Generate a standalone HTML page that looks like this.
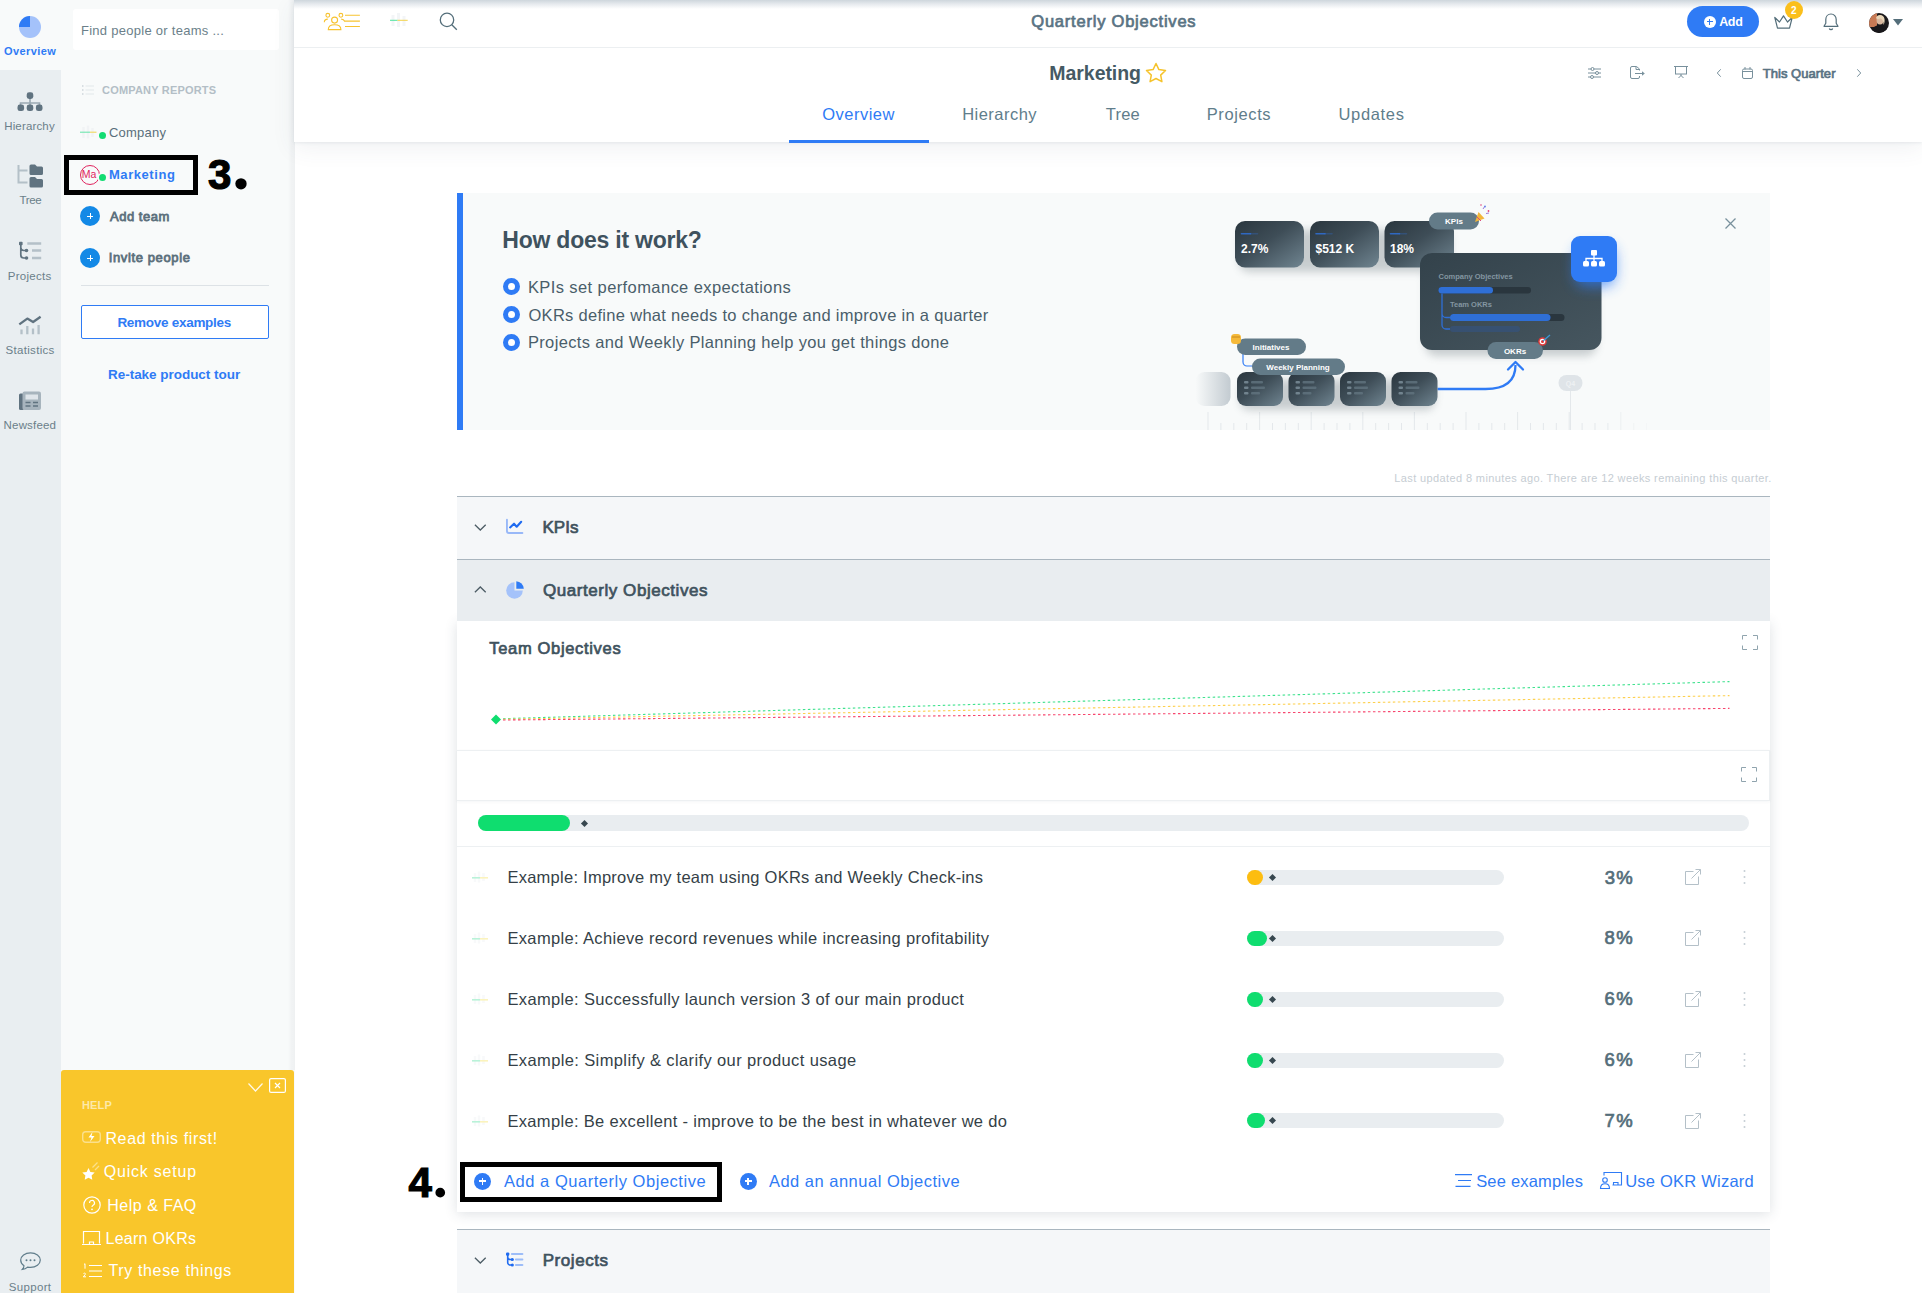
<!DOCTYPE html>
<html lang="en">
<head>
<meta charset="utf-8">
<title>Quarterly Objectives</title>
<style>
*{box-sizing:border-box;margin:0;padding:0}
html,body{width:1922px;height:1293px;overflow:hidden;background:#fff}
body{position:relative;font-family:"Liberation Sans",sans-serif;color:#475b67}
.a{position:absolute}
.t{position:absolute;white-space:nowrap;line-height:1}
svg{position:absolute;overflow:visible}
b,.b{font-weight:bold}
/* left rail */
#rail{left:0;top:0;width:61px;height:1293px;background:#e9eef1}
#rail .sel{left:0;top:0;width:61px;height:70px;background:#f8fafa}
.rl{font-size:12px;color:#6b7f8a;width:61px;text-align:center;left:0}
/* sidebar */
#side{left:61px;top:0;width:234px;height:1293px;background:#f8fafa}
#search{left:12px;top:8.500px;width:206px;height:41.500px;background:#fff;border-radius:3px}
.sl{font-size:13.5px;color:#5f737e;left:48px}
.plus{width:20px;height:20px;border-radius:10px;background:#1389e6;left:19px}
.plus:before{content:"";position:absolute;left:7px;top:9.500px;width:6px;height:1px;background:#fff}
.plus:after{content:"";position:absolute;left:9.500px;top:7px;width:1px;height:6px;background:#fff}
.gdot{width:7px;height:7px;border-radius:4px;background:#13dc72;box-shadow:0 0 0 1.500px #f9fafb}
#help{left:0;top:1070px;width:233px;height:223px;background:#f9c62b;border-radius:3px 3px 0 0}
.hl{font-size:16.5px;color:#fff}
/* main */
#main{left:294px;top:0;width:1628px;height:1293px;background:linear-gradient(90deg,transparent 1px,#fff 1px)}
#hdr{left:0;top:0;width:1628px;height:142px;background:#fff;box-shadow:0 1px 3px rgba(60,80,100,.09),0 6px 22px rgba(60,80,100,.08)}
#topline{left:0;top:47px;width:1628px;height:1px;background:#eceff1}
#topshade{left:0;top:0;width:1628px;height:9px;background:linear-gradient(#ced6dc,#e6eaee 45%,#fff)}
.tab{font-size:17px;color:#6b7f8a}
.sec{left:163px;width:1313px;border-top:1px solid #aab6bf;background:#f5f7f9}
.sect{font-size:17px;font-weight:bold;color:#475b67;left:249px}
.row{font-size:17px;color:#37474f;left:214px}
.pct{font-size:17px;color:#546e7a;font-weight:bold;width:40px;text-align:right;left:1298px}
.trk{left:953px;width:257px;height:15px;border-radius:8px;background:#e9edf0}
.fill{left:953px;height:15px;border-radius:8px;background:#0fdd6f}
.dm{width:5px;height:5px;background:#37474f;transform:rotate(45deg)}
.lnk{font-size:17px;color:#2f7bf5}
</style>
</head>
<body>
<!-- LEFT RAIL -->
<div id="rail" class="a">
  <div class="a sel"></div>
  <svg style="left:18px;top:14.800px" width="24" height="24" viewBox="0 0 24 24"><circle cx="12" cy="12" r="11" fill="#a4c2fa"/><path d="M12 12V1A11 11 0 0 0 1 12Z" fill="#2f7bf5"/></svg>
  <svg style="left:17px;top:92px" width="26" height="20" viewBox="0 0 26 20"><path d="M13 6v5M3.5 14v-3h19v3M13 11v3" stroke="#9aa9b3" stroke-width="1.6" fill="none"/><rect x="9.700" y="0.300" width="6.600" height="6.600" rx="2.400" fill="#607380"/><rect x="0.5" y="12.5" width="6.6" height="6.6" rx="2.4" fill="#607380"/><rect x="9.7" y="12.5" width="6.6" height="6.6" rx="2.4" fill="#607380"/><rect x="18.9" y="12.5" width="6.6" height="6.6" rx="2.4" fill="#607380"/></svg>
  <svg style="left:17px;top:164px" width="26" height="24" viewBox="0 0 26 24"><path d="M1.5 1v17.5h9M1.5 6.5h9" stroke="#b4c0c8" stroke-width="2" fill="none"/><path d="M12.5 2a1.5 1.5 0 0 1 1.500-1.500h4l2 2h4.500a1.500 1.500 0 0 1 1.500 1.500v5.500a1.500 1.500 0 0 1-1.500 1.500h-10.500a1.500 1.500 0 0 1-1.500-1.500z" fill="#607380"/><path d="M12.500 14.500a1.500 1.500 0 0 1 1.500-1.500h4l2 2h4.500a1.500 1.500 0 0 1 1.500 1.500v5.500a1.500 1.500 0 0 1-1.500 1.500h-10.500a1.500 1.500 0 0 1-1.500-1.500z" fill="#607380"/></svg>
  <svg style="left:19px;top:241px" width="22" height="20" viewBox="0 0 22 20"><path d="M8.300 2.500H22.200M13 9.500H22.200M13 17H22.200" stroke="#b4c0c8" stroke-width="2.500" fill="none"/><rect x="0" y="0.700" width="3.600" height="3.600" rx=".8" fill="#607380"/><path d="M1.800 3v11a3 3 0 0 0 3 3h2.700M1.800 6.500a3 3 0 0 0 3 3h2.700" stroke="#607380" stroke-width="1.700" fill="none"/><circle cx="7.500" cy="9.500" r="1.800" fill="#607380"/><circle cx="7.500" cy="17" r="1.800" fill="#607380"/></svg>
  <svg style="left:19px;top:315px" width="22" height="20" viewBox="0 0 22 20"><path d="M2.500 14.600V19.200M8.300 11V19.200M14 13.400V19.200M19.600 10V19.200" stroke="#b4c0c8" stroke-width="2.300" fill="none"/><path d="M0.300 9.400L8.300 3.600L14.100 7L21.600 1.800" stroke="#607380" stroke-width="2.300" fill="none" stroke-linejoin="round"/></svg>
  <svg style="left:19px;top:391px" width="22" height="20" viewBox="0 0 22 20"><rect x="0" y="2.500" width="5" height="16.500" rx="1.500" fill="#607380"/><rect x="3.500" y="0.500" width="18.500" height="18.500" rx="2" fill="#a7b4bd"/><rect x="6.500" y="3.500" width="12.500" height="5" fill="#dfe5ea"/><path d="M6.500 11.500h5M14 11.500h5M6.500 15h5M14 15h5" stroke="#607380" stroke-width="1.600"/></svg>
  <svg style="left:19px;top:1252px" width="22" height="20" viewBox="0 0 22 20"><path d="M11.500 0.800c5.500 0 9.800 3.200 9.800 7.300s-4.300 7.300-9.800 7.300c-1 0-2-.1-2.900-.3-1.500 1.500-3.400 2.300-5.300 2.400 1-1 1.600-2.300 1.700-3.700C2.900 12.500 1.700 10.400 1.700 8.100c0-4.100 4.300-7.300 9.800-7.300z" stroke="#607d8b" stroke-width="1.200" fill="none"/><circle cx="7.500" cy="8.200" r="1" fill="#607d8b"/><circle cx="11.500" cy="8.200" r="1" fill="#607d8b"/><circle cx="15.500" cy="8.200" r="1" fill="#607d8b"/></svg>
</div>
<!-- SIDEBAR -->
<div id="side" class="a">
  <div class="a" style="left:227px;top:0;width:7px;height:1070px;background:linear-gradient(90deg,#f8fafa,#f1f3f4 50%,#eff1f2)"></div>
  <div id="search" class="a"></div>
  <svg style="left:21px;top:85px" width="12" height="10" viewBox="0 0 12 10"><path d="M0 1h1.500M0 5h1.500M0 9h1.500" stroke="#cdd5da" stroke-width="1.300"/><path d="M3.500 1h8.500M3.500 5h8.500M3.500 9h8.500" stroke="#e2e7ea" stroke-width="1.200"/></svg>
  <svg style="left:19px;top:123px" width="18" height="18" viewBox="0 0 18 18"><path d="M3.500 4v11M8 2.500v13M12.500 5v9" stroke="#f1f3f5" stroke-width="2.500"/><path d="M0 9.200h10" stroke="#6fe6ae" stroke-width="1.100"/><path d="M10 9.200h6.500" stroke="#f1d75c" stroke-width="1.100"/></svg>
  <div class="a gdot" style="left:38px;top:132px"></div>
  <div class="a" style="left:3px;top:155px;width:134px;height:40px;border:5px solid #000"></div>
  <div class="a" style="left:19px;top:165px;width:20px;height:20px;border-radius:10px;border:1px solid #e0245e"></div>
  <div class="a gdot" style="left:38px;top:174px"></div>
  <div class="a plus" style="top:206px"></div>
  <div class="a plus" style="top:248px"></div>
  <div class="a" style="left:20px;top:285px;width:188px;height:1px;background:#dde2e6"></div>
  <div class="a" style="left:20px;top:305px;width:188px;height:34px;border:1.500px solid #2f7bf5;background:#fff;border-radius:2px"></div>
  <div id="help" class="a">
    <svg style="left:187px;top:13px" width="15" height="9" viewBox="0 0 15 9"><path d="M0.500 0.500l7 7.500 7-7.500" stroke="#fff" stroke-width="1.200" fill="none" opacity=".9"/></svg>
    <svg style="left:208px;top:8px" width="17" height="15" viewBox="0 0 17 15"><rect x="0.600" y="0.600" width="15.800" height="13.800" rx="1.500" stroke="#fff" stroke-width="1.200" fill="none"/><path d="M6 5l5 5M11 5l-5 5" stroke="#fff" stroke-width="1.200"/></svg>
    <svg style="left:21px;top:60px" width="19" height="14" viewBox="0 0 19 14"><rect x="0.700" y="1.700" width="17.600" height="10.600" rx="3" stroke="#fbe08c" stroke-width="1.400" fill="none"/><path d="M10.500 2l-4 5.500h3l-1.500 4.500 4.500-6h-3z" fill="#fff"/></svg>
    <svg style="left:21px;top:92px" width="18" height="18" viewBox="0 0 18 18"><path d="M6.500 6l1.900 3.900 4.300.6-3.100 3 .7 4.300-3.800-2-3.800 2 .7-4.300-3.100-3 4.300-.6z" fill="#fff"/><path d="M10.500 5.500l5-5M13 8l4-4" stroke="#fbe08c" stroke-width="1.300"/></svg>
    <svg style="left:22px;top:126px" width="18" height="18" viewBox="0 0 18 18"><circle cx="9" cy="9" r="8.200" stroke="#fff" stroke-width="1.200" fill="none"/><path d="M6.500 7a2.500 2.500 0 1 1 3.600 2.200c-.7.400-1.100.9-1.100 1.800" stroke="#fff" stroke-width="1.200" fill="none"/><circle cx="9" cy="13.300" r=".9" fill="#fff"/></svg>
    <svg style="left:21px;top:160px" width="19" height="16" viewBox="0 0 19 16"><path d="M1.500 13.500v-12h16v12M0 14.500h19" stroke="#fff" stroke-width="1.200" fill="none"/><path d="M7.500 14.500v-2.500h4v2.500" stroke="#fff" stroke-width="1.200" fill="none"/></svg>
    <svg style="left:22px;top:193px" width="19" height="16" viewBox="0 0 19 16"><path d="M6 2.500h13M6 8h13M6 13.500h13" stroke="#fff" stroke-width="1.200"/><path d="M1 1.500l1-.8v5M.5 10.500c1.500-1 2.500.2 1.500 1.300l-1.700 2h2.700" stroke="#fff" stroke-width="1" fill="none"/></svg>
  </div>
</div>

<!-- MAIN -->
<div id="main" class="a">
  <div id="hdr" class="a">
    <div id="topshade" class="a"></div>
    <div id="topline" class="a"></div>
    <!-- top-left icons (coords relative to main: x-294) -->
    <!-- Add button -->
    <div class="a" style="left:1393px;top:6px;width:72px;height:31px;border-radius:16px;background:#2f7bf5"></div>
    <div class="a" style="left:1409.500px;top:15.500px;width:12px;height:12px;border-radius:6px;background:#fff"></div>
    <div class="a" style="left:1412.500px;top:20.750px;width:6px;height:1.500px;background:#2f7bf5"></div>
    <div class="a" style="left:1414.750px;top:18.500px;width:1.500px;height:6px;background:#2f7bf5"></div>
    <svg style="left:1480px;top:15px" width="19" height="14" viewBox="0 0 19 14"><path d="M0.800 2.500l2.700 10.700h12l2.700-10.700-4.700 4.500-4-6.200-4 6.200z" stroke="#546e7a" stroke-width="1.200" fill="none" stroke-linejoin="round"/></svg>
    <div class="a" style="left:1491px;top:1px;width:18px;height:18px;border-radius:9px;background:#fbbf1c"></div>
    <svg style="left:1529px;top:13px" width="16" height="18" viewBox="0 0 16 18"><path d="M8 1c-3 0-5.200 2.300-5.200 5.500v3.800l-1.800 3h14l-1.800-3v-3.800c0-3.200-2.200-5.500-5.200-5.500z" stroke="#546e7a" stroke-width="1.200" fill="none" stroke-linejoin="round"/><path d="M6.300 15.500a1.800 1.800 0 0 0 3.400 0" stroke="#546e7a" stroke-width="1.200" fill="none"/></svg>
    <svg style="left:1575px;top:13px" width="20" height="20" viewBox="0 0 20 20"><defs><clipPath id="av"><circle cx="10" cy="10" r="10"/></clipPath></defs><g clip-path="url(#av)"><rect width="20" height="20" fill="#1c1a1c"/><rect x="0" y="0" width="8" height="14" fill="#c87a55"/><ellipse cx="11" cy="7" rx="3.500" ry="4.500" fill="#d9b9a0"/><path d="M7 5c1-4 8-4 8.500 1 .5 3-.5 5-1 6 0-4-1-6-3-6.500-2 .5-3.500 1-4.500-.5z" fill="#e8d6b8"/><path d="M2 20c1-6 5-8 9-8s7 2 8 8z" fill="#18171a"/></g></svg>
    <svg style="left:1599px;top:19px" width="10" height="7" viewBox="0 0 10 7"><path d="M0 0h10l-5 6.500z" fill="#546e7a"/></svg>
    <!-- second row -->
    <svg style="left:851px;top:62px" width="22" height="21" viewBox="0 0 22 21"><path d="M11 1.500l2.900 6.100 6.600.9-4.800 4.600 1.200 6.600-5.900-3.200-5.900 3.200 1.200-6.600-4.800-4.600 6.600-.9z" stroke="#f5c32c" stroke-width="1.500" fill="none" stroke-linejoin="round"/></svg>
    <svg style="left:1294px;top:67px" width="13" height="12" viewBox="0 0 13 12"><g stroke="#78909c" stroke-width="1" fill="#fff"><path d="M0 2h13M0 6h13M0 10h13"/><circle cx="4.500" cy="2" r="1.500"/><circle cx="9" cy="6" r="1.500"/><circle cx="4" cy="10" r="1.500"/></g></svg>
    <svg style="left:1336px;top:66px" width="15" height="13" viewBox="0 0 15 13"><g stroke="#78909c" stroke-width="1" fill="none"><path d="M9.500 4.500v-1.500l-3-2.500h-4.500a1.500 1.500 0 0 0-1.500 1.500v9a1.500 1.500 0 0 0 1.500 1.500h6a1.500 1.500 0 0 0 1.500-1.500v-1"/><path d="M6 0.500v3h3.500"/><path d="M5 7.500h8.500"/></g><path d="M12 5.200l2.800 2.300-2.800 2.300z" fill="#78909c"/></svg>
    <svg style="left:1380px;top:66px" width="14" height="12" viewBox="0 0 14 12"><g stroke="#78909c" stroke-width="1" fill="none"><path d="M0 0.500h14"/><rect x="1.500" y="0.500" width="11" height="7.500"/><path d="M7 8v2M7 9.500l-2.500 2.500M7 9.500l2.500 2.500"/></g></svg>
    <svg style="left:1422.500px;top:69.300px" width="4" height="8" viewBox="0 0 4 8"><path d="M3.700 0.300l-3.400 3.700 3.400 3.700" stroke="#78909c" stroke-width="1" fill="none"/></svg>
    <svg style="left:1448px;top:66.500px" width="11" height="12" viewBox="0 0 11 12"><g stroke="#78909c" stroke-width="1" fill="none"><rect x="0.500" y="2" width="10" height="9.500" rx="1.500"/><path d="M0.500 4.500h10M3 0v2.500M8 0v2.500"/></g></svg>
    <svg style="left:1563px;top:69.300px" width="4" height="8" viewBox="0 0 4 8"><path d="M0.300 0.300l3.400 3.700-3.400 3.700" stroke="#78909c" stroke-width="1" fill="none"/></svg>
    <!-- tabs -->
    <div class="a" style="left:495px;top:139.500px;width:140px;height:3px;background:#2f7bf5"></div>
  </div>

  <!-- BANNER (x relative to main: abs-294) -->
  <div class="a" style="left:163px;top:193px;width:1313px;height:237px;background:#f8fafa;border-left:6px solid #2f7bf5"></div>
  <div class="a" style="left:209px;top:278px;width:17px;height:17px;border-radius:9px;border:5px solid #2f7bf5;background:#fff"></div>
  <div class="a" style="left:209px;top:306px;width:17px;height:17px;border-radius:9px;border:5px solid #2f7bf5;background:#fff"></div>
  <div class="a" style="left:209px;top:333.500px;width:17px;height:17px;border-radius:9px;border:5px solid #2f7bf5;background:#fff"></div>
  <svg style="left:1431px;top:218px" width="11" height="11" viewBox="0 0 11 11"><path d="M0.500 0.500l10 10M10.500 0.500l-10 10" stroke="#78909c" stroke-width="1.300"/></svg>


  <svg style="left:0;top:0" width="1628" height="1293" viewBox="294 0 1628 1293">
    <defs>
      <linearGradient id="gd" x1="0" y1="0" x2="1" y2="1"><stop offset="0" stop-color="#2a363e"/><stop offset=".45" stop-color="#3e4d57"/><stop offset="1" stop-color="#708591"/></linearGradient>
      <linearGradient id="gb" x1="0" y1="0" x2="1" y2="1"><stop offset="0" stop-color="#33424b"/><stop offset="1" stop-color="#46565f"/></linearGradient>
      <linearGradient id="gf" x1="0" y1="0" x2="1" y2="0"><stop offset="0" stop-color="#f8fafa"/><stop offset="1" stop-color="#c3cbd1"/></linearGradient>
      <filter id="glow" x="-60%" y="-60%" width="220%" height="220%"><feGaussianBlur stdDeviation="7"/></filter>
      <filter id="sh" x="-30%" y="-30%" width="160%" height="180%"><feGaussianBlur stdDeviation="4"/></filter>
    </defs>
    <path d="M1208.0 412V430" stroke="#e4e8eb" stroke-width="1" opacity="1.00"/><path d="M1220.9 423V430" stroke="#e4e8eb" stroke-width="1" opacity="1.00"/><path d="M1233.8 423V430" stroke="#e4e8eb" stroke-width="1" opacity="1.00"/><path d="M1246.7 423V430" stroke="#e4e8eb" stroke-width="1" opacity="1.00"/><path d="M1259.6 412V430" stroke="#e4e8eb" stroke-width="1" opacity="1.00"/><path d="M1272.5 423V430" stroke="#e4e8eb" stroke-width="1" opacity="1.00"/><path d="M1285.4 423V430" stroke="#e4e8eb" stroke-width="1" opacity="1.00"/><path d="M1298.3 423V430" stroke="#e4e8eb" stroke-width="1" opacity="1.00"/><path d="M1311.2 412V430" stroke="#e4e8eb" stroke-width="1" opacity="1.00"/><path d="M1324.1 423V430" stroke="#e4e8eb" stroke-width="1" opacity="1.00"/><path d="M1337.0 423V430" stroke="#e4e8eb" stroke-width="1" opacity="1.00"/><path d="M1349.9 423V430" stroke="#e4e8eb" stroke-width="1" opacity="1.00"/><path d="M1362.8 412V430" stroke="#e4e8eb" stroke-width="1" opacity="1.00"/><path d="M1375.7 423V430" stroke="#e4e8eb" stroke-width="1" opacity="1.00"/><path d="M1388.6 423V430" stroke="#e4e8eb" stroke-width="1" opacity="1.00"/><path d="M1401.5 423V430" stroke="#e4e8eb" stroke-width="1" opacity="1.00"/><path d="M1414.4 412V430" stroke="#e4e8eb" stroke-width="1" opacity="1.00"/><path d="M1427.3 423V430" stroke="#e4e8eb" stroke-width="1" opacity="1.00"/><path d="M1440.2 423V430" stroke="#e4e8eb" stroke-width="1" opacity="1.00"/><path d="M1453.1 423V430" stroke="#e4e8eb" stroke-width="1" opacity="1.00"/><path d="M1466.0 412V430" stroke="#e4e8eb" stroke-width="1" opacity="1.00"/><path d="M1478.9 423V430" stroke="#e4e8eb" stroke-width="1" opacity="1.00"/><path d="M1491.8 423V430" stroke="#e4e8eb" stroke-width="1" opacity="1.00"/><path d="M1504.7 423V430" stroke="#e4e8eb" stroke-width="1" opacity="1.00"/><path d="M1517.6 412V430" stroke="#e4e8eb" stroke-width="1" opacity="1.00"/><path d="M1530.5 423V430" stroke="#e4e8eb" stroke-width="1" opacity="1.00"/><path d="M1543.4 423V430" stroke="#e4e8eb" stroke-width="1" opacity="1.00"/><path d="M1556.3 423V430" stroke="#e4e8eb" stroke-width="1" opacity="1.00"/><path d="M1569.2 412V430" stroke="#e4e8eb" stroke-width="1" opacity="1.00"/><path d="M1582.1 423V430" stroke="#e4e8eb" stroke-width="1" opacity="1.00"/><path d="M1595.0 423V430" stroke="#e4e8eb" stroke-width="1" opacity="1.00"/><path d="M1607.9 423V430" stroke="#e4e8eb" stroke-width="1" opacity="0.84"/><path d="M1620.8 412V430" stroke="#e4e8eb" stroke-width="1" opacity="0.58"/><path d="M1633.7 423V430" stroke="#e4e8eb" stroke-width="1" opacity="0.33"/><path d="M1646.6 423V430" stroke="#e4e8eb" stroke-width="1" opacity="0.20"/>

    <g stroke="#f7c331" stroke-width="1.100" fill="none"><circle cx="327.800" cy="15.300" r="1.900"/><path d="M324.300 22.300c0-2 1.300-3.200 3.500-3.200"/><circle cx="334.600" cy="20.100" r="3"/><path d="M328.300 29.600c0-3.200 2.600-4.800 6.300-4.800s6.300 1.600 6.300 4.800z"/><circle cx="340.900" cy="15.300" r="1.900"/><path d="M341.200 19.100c1.800 0 3 .9 3.600 2.400"/><path d="M345 15.300H359.900M344.500 21.100H359.900M345 26.500H359.900"/></g>
    <path d="M393 15v11M398.500 13v14M404 16v10" stroke="#f3f5f7" stroke-width="3"/>
    <path d="M390 20.300H397.500" stroke="#4fe3a0" stroke-width="1"/><path d="M397.500 20.300H407.700" stroke="#f3d34a" stroke-width="1"/>
    <circle cx="447" cy="19.900" r="6.700" stroke="#546e7a" stroke-width="1.300" fill="none"/><path d="M451.800 24.700L456.800 29.800" stroke="#546e7a" stroke-width="1.300"/>
    <path d="M1570.500 391V430" stroke="#e4e8eb" stroke-width="1"/>
    <rect x="1558.500" y="375" width="24" height="16" rx="8" fill="#dfe4e8"/>
    <text x="1570.500" y="386" font-size="7" font-weight="bold" fill="#eef1f3" text-anchor="middle" font-family="Liberation Sans, sans-serif">Q4</text>
    <g opacity=".25" filter="url(#sh)"><rect x="1239" y="230" width="212" height="42" rx="10" fill="#37474f"/><rect x="1425" y="262" width="172" height="94" rx="12" fill="#37474f"/><rect x="1240" y="380" width="195" height="30" rx="9" fill="#37474f"/></g>
    <rect x="1235" y="221" width="69" height="46.500" rx="10" fill="url(#gd)"/>
    <rect x="1310" y="221" width="69" height="46.500" rx="10" fill="url(#gd)"/>
    <rect x="1384.500" y="221" width="69.500" height="46.500" rx="10" fill="url(#gd)"/>
    <path d="M1241.500 233.700h9M1316 233.700h9M1390.500 233.700h9" stroke="#2f6fd6" stroke-width="1.600" stroke-linecap="round" opacity=".85"/><path d="M1250.500 233.700h7M1325 233.700h7M1399.500 233.700h7" stroke="#2f6fd6" stroke-width="1.600" stroke-linecap="round" opacity=".3"/>
    <g font-family="Liberation Sans, sans-serif" font-weight="bold" fill="#fff" font-size="12">
      <text x="1241" y="252.500">2.7%</text><text x="1315.500" y="252.500">$512 K</text><text x="1390" y="252.500">18%</text>
    </g>
    <rect x="1429" y="212.500" width="50" height="17" rx="8.500" fill="#637b88"/>
    <text x="1454" y="224" font-size="8" font-weight="bold" fill="#fff" text-anchor="middle" font-family="Liberation Sans, sans-serif">KPIs</text>
    <g><path d="M1475 222l3.500-10 6 6.500z" fill="#f2b53a"/><path d="M1477 217l4 4" stroke="#d94b7b" stroke-width="1"/><circle cx="1485" cy="206.500" r=".9" fill="#4a8df5"/><circle cx="1488.500" cy="211" r=".9" fill="#e0457b"/><circle cx="1481" cy="205" r=".8" fill="#e0457b"/><path d="M1483 209l2-3M1486 213.500l3-.5" stroke="#8d6ad9" stroke-width=".9"/></g>
    <rect x="1420" y="253" width="181.500" height="97" rx="12" fill="url(#gb)"/>
    <rect x="1575" y="246" width="40" height="40" rx="9" fill="#2f7bf5" opacity=".75" filter="url(#glow)"/>
    <rect x="1571" y="236" width="46" height="46" rx="9" fill="#2f7bf5"/>
    <g fill="#fff"><rect x="1591" y="250" width="6" height="5.500" rx="1"/><rect x="1583" y="261" width="6" height="5.500" rx="1.500"/><rect x="1591" y="261" width="6" height="5.500" rx="1.500"/><rect x="1599" y="261" width="6" height="5.500" rx="1.500"/><path d="M1594 255v6M1586 261v-2.500h16v2.500" stroke="#fff" stroke-width="1.300" fill="none"/></g>
    <text x="1438.500" y="279" font-size="7.500" font-weight="bold" fill="#8496a1" font-family="Liberation Sans, sans-serif">Company Objectives</text>
    <rect x="1438.500" y="287" width="92.500" height="6.500" rx="3.200" fill="#2a363e"/>
    <rect x="1438.500" y="287" width="54.500" height="6.500" rx="3.200" fill="#2f6fd6"/>
    <text x="1450" y="306.500" font-size="7.500" font-weight="bold" fill="#8496a1" font-family="Liberation Sans, sans-serif">Team OKRs</text>
    <path d="M1442 293.500v20a4 4 0 0 0 4 4h4M1442 312v13a4 4 0 0 0 4 4h4" stroke="#2f6fd6" stroke-width="1.300" fill="none"/>
    <rect x="1450" y="314" width="114.500" height="7" rx="3.500" fill="#2a363e"/>
    <rect x="1450" y="314" width="100.500" height="7" rx="3.500" fill="#2f6fd6"/>
    <rect x="1450" y="326" width="70" height="6" rx="3" fill="#34527e" opacity=".7"/>
    <path d="M1437.500 389h48c20 0 30-8 30-24" stroke="#2f7bf5" stroke-width="2.300" fill="none"/>
    <path d="M1508 369.500l7.500-7.500 7.500 7.500" stroke="#2f7bf5" stroke-width="2.300" fill="none" stroke-linecap="round" stroke-linejoin="round"/>
    <rect x="1487.500" y="342" width="55.500" height="17" rx="8.500" fill="#637b88"/>
    <text x="1515" y="353.500" font-size="8" font-weight="bold" fill="#fff" text-anchor="middle" font-family="Liberation Sans, sans-serif">OKRs</text>
    <g><circle cx="1542.500" cy="341.500" r="4.300" fill="#e03a3a"/><circle cx="1542.500" cy="341.500" r="2.800" fill="#fff"/><circle cx="1542.500" cy="341.500" r="1.500" fill="#e03a3a"/><path d="M1543 341l7-6" stroke="#3a9ad9" stroke-width="1.300"/></g>
    <rect x="1195.500" y="372" width="35" height="34" rx="9" fill="url(#gf)"/>
    <rect x="1237" y="372" width="46" height="34" rx="9" fill="url(#gd)"/><rect x="1244" y="381" width="4.500" height="2.400" rx="1" fill="#7f929d" opacity=".8"/><rect x="1251" y="381" width="12" height="2.400" rx="1" fill="#61747f" opacity=".8"/><rect x="1244" y="386.5" width="4.500" height="2.400" rx="1" fill="#7f929d" opacity=".8"/><rect x="1251" y="386.5" width="14" height="2.400" rx="1" fill="#61747f" opacity=".8"/><rect x="1244" y="392" width="4.500" height="2.400" rx="1" fill="#7f929d" opacity=".8"/><rect x="1251" y="392" width="9" height="2.400" rx="1" fill="#61747f" opacity=".8"/><rect x="1288.5" y="372" width="46" height="34" rx="9" fill="url(#gd)"/><rect x="1295.5" y="381" width="4.500" height="2.400" rx="1" fill="#7f929d" opacity=".8"/><rect x="1302.5" y="381" width="12" height="2.400" rx="1" fill="#61747f" opacity=".8"/><rect x="1295.5" y="386.5" width="4.500" height="2.400" rx="1" fill="#7f929d" opacity=".8"/><rect x="1302.5" y="386.5" width="14" height="2.400" rx="1" fill="#61747f" opacity=".8"/><rect x="1295.5" y="392" width="4.500" height="2.400" rx="1" fill="#7f929d" opacity=".8"/><rect x="1302.5" y="392" width="9" height="2.400" rx="1" fill="#61747f" opacity=".8"/><rect x="1340" y="372" width="46" height="34" rx="9" fill="url(#gd)"/><rect x="1347" y="381" width="4.500" height="2.400" rx="1" fill="#7f929d" opacity=".8"/><rect x="1354" y="381" width="12" height="2.400" rx="1" fill="#61747f" opacity=".8"/><rect x="1347" y="386.5" width="4.500" height="2.400" rx="1" fill="#7f929d" opacity=".8"/><rect x="1354" y="386.5" width="14" height="2.400" rx="1" fill="#61747f" opacity=".8"/><rect x="1347" y="392" width="4.500" height="2.400" rx="1" fill="#7f929d" opacity=".8"/><rect x="1354" y="392" width="9" height="2.400" rx="1" fill="#61747f" opacity=".8"/><rect x="1391.5" y="372" width="46" height="34" rx="9" fill="url(#gd)"/><rect x="1398.5" y="381" width="4.500" height="2.400" rx="1" fill="#7f929d" opacity=".8"/><rect x="1405.5" y="381" width="12" height="2.400" rx="1" fill="#61747f" opacity=".8"/><rect x="1398.5" y="386.5" width="4.500" height="2.400" rx="1" fill="#7f929d" opacity=".8"/><rect x="1405.5" y="386.5" width="14" height="2.400" rx="1" fill="#61747f" opacity=".8"/><rect x="1398.5" y="392" width="4.500" height="2.400" rx="1" fill="#7f929d" opacity=".8"/><rect x="1405.5" y="392" width="9" height="2.400" rx="1" fill="#61747f" opacity=".8"/>
    <path d="M1243 354v8a4 4 0 0 0 4 4h6" stroke="#2f7bf5" stroke-width="1.200" fill="none"/>
    <rect x="1237" y="338.500" width="69" height="16.500" rx="8.200" fill="#637b88"/>
    <text x="1271" y="349.700" font-size="8" font-weight="bold" fill="#fff" text-anchor="middle" font-family="Liberation Sans, sans-serif">Initiatives</text>
    <rect x="1252" y="358.500" width="93" height="16.500" rx="8.200" fill="#637b88"/>
    <text x="1298" y="369.700" font-size="8" font-weight="bold" fill="#fff" text-anchor="middle" font-family="Liberation Sans, sans-serif">Weekly Planning</text>
    <g><rect x="1231" y="334" width="10" height="10" rx="3.500" fill="#f5b93a"/><path d="M1232 337h8" stroke="#c98a1c" stroke-width="1"/></g>
  </svg>


  <!-- Card -->
  <div class="a" style="left:163px;top:620.500px;width:1313px;height:591.500px;background:#fff;box-shadow:0 2px 12px rgba(50,70,90,.16)"></div>
  <!-- KPIs -->
  <div class="a sec" style="top:496px;height:63px"></div>
  <svg style="left:180px;top:523.500px" width="13" height="7" viewBox="0 0 13 7"><path d="M0.900 0.700l5.400 5.300 5.400-5.300" stroke="#4d5d66" stroke-width="1.300" fill="none"/></svg>
  <svg style="left:212px;top:519px" width="18" height="15" viewBox="0 0 18 15"><path d="M0.950 0.700V12a2 2 0 0 0 2 2H16.400" stroke="#98b8f8" stroke-width="1.900" fill="none" stroke-linecap="round"/><path d="M4.100 8.400L8 4.700L10.700 7.700L15.200 2.800" stroke="#1f6bf0" stroke-width="2.100" fill="none" stroke-linejoin="round" stroke-linecap="round"/></svg>
  <!-- Quarterly Objectives -->
  <div class="a sec" style="top:559px;height:62px;background:#e9edf0"></div>
  <svg style="left:180px;top:586px" width="13" height="7" viewBox="0 0 13 7"><path d="M0.900 6.300l5.400-5.300 5.400 5.300" stroke="#4d5d66" stroke-width="1.300" fill="none"/></svg>
  <svg style="left:212px;top:581px" width="18" height="18" viewBox="0 0 18 18"><circle cx="8.500" cy="9.500" r="8.300" fill="#a4c2fa"/><path d="M8.500 9.500V0h1.500a8 8 0 0 1 8 8v1.500z" fill="#e9edf0"/><path d="M10.300 7.700V0.200a8 8 0 0 1 7.500 7.500z" fill="#2f7bf5"/></svg>
  <!-- Projects -->
  <div class="a sec" style="top:1229px;height:64px"></div>
  <svg style="left:180px;top:1256.500px" width="13" height="7" viewBox="0 0 13 7"><path d="M0.900 0.700l5.400 5.300 5.400-5.300" stroke="#4d5d66" stroke-width="1.300" fill="none"/></svg>
  <svg style="left:212px;top:1252px" width="18" height="15" viewBox="0 0 18 15"><path d="M5.900 2H16.400M9.900 7.500H16.400M9.900 13H16.400" stroke="#9dbdf8" stroke-width="2" stroke-linecap="round"/><path d="M1.700 2V10.500a2.500 2.500 0 0 0 2.500 2.500H6.200M1.700 5a2.500 2.500 0 0 0 2.500 2.500H6.200" stroke="#1f6bf0" stroke-width="1.600" fill="none"/><rect x="0" y="0.400" width="3.300" height="3.300" rx="1.200" fill="#1f6bf0"/><circle cx="6.300" cy="7.500" r="1.600" fill="#1f6bf0"/><circle cx="6.300" cy="13" r="1.600" fill="#1f6bf0"/></svg>
  <svg style="left:1447.500px;top:635px" width="16" height="15" viewBox="0 0 16 15"><path d="M0.500 4.500v-4h4.500M11 0.500h4.500v4M15.500 10.500v4h-4.500M5 14.500h-4.500v-4" stroke="#90a4ae" stroke-width="1" fill="none"/></svg>
  <svg style="left:0;top:0" width="1628" height="1293" viewBox="294 0 1628 1293">
    <path d="M503 718.700L1729.500 681.600" stroke="#3fe28e" stroke-width="1.100" stroke-dasharray="2.500 2.500" fill="none"/>
    <path d="M503 719.300L1729.500 695.600" stroke="#fdd04e" stroke-width="1.100" stroke-dasharray="2.500 2.500" fill="none"/>
    <path d="M503 720L1729.500 708.400" stroke="#f7466e" stroke-width="1.100" stroke-dasharray="2.500 2.500" fill="none"/>
    <path d="M491 719.500l5-5 5 5-5 5z" fill="#0fdd6f"/>
  </svg>
  <div class="a" style="left:163px;top:750px;width:1313px;height:51px;border:1px solid #edf0f2;border-left:0;box-shadow:0 1px 3px rgba(50,70,90,.05)"></div>
  <svg style="left:1447px;top:767px" width="16" height="15" viewBox="0 0 16 15"><path d="M0.500 4.500v-4h4.500M11 0.500h4.500v4M15.500 10.500v4h-4.500M5 14.500h-4.500v-4" stroke="#90a4ae" stroke-width="1" fill="none"/></svg>
  <div class="a" style="left:163px;top:845.500px;width:1313px;height:1px;background:#edf0f2"></div>
  <div class="a" style="left:184px;top:815px;width:1271px;height:16px;border-radius:8px;background:#e9edf0"></div>
  <div class="a" style="left:184px;top:815px;width:92px;height:16px;border-radius:8px;background:#0fdd6f"></div>
  <div class="a dm" style="left:288px;top:821px"></div>
  <svg style="left:178px;top:868px" width="18" height="18" viewBox="0 0 18 18"><path d="M3 5v9M7 3.500v11M11.500 5v8" stroke="#f8f9fa" stroke-width="2.500"/><path d="M0 9.800h8" stroke="#b9f2d8" stroke-width="1.600"/><path d="M8 9.800h8" stroke="#fbf3bd" stroke-width="1.600"/></svg>
  <div class="a trk" style="top:869.5px"></div>
  <div class="a fill" style="top:869.5px;width:16px;background:#fdbd10"></div>
  <div class="a dm" style="left:976px;top:874.5px"></div>
  <svg style="left:1391px;top:869px" width="16" height="16" viewBox="0 0 16 16"><path d="M8.500 2.500h-8v13h13v-8" stroke="#b4c0c8" stroke-width="1" fill="none"/><path d="M6.500 9.500l9-9M10.500 0.500h5v5" stroke="#b4c0c8" stroke-width="1" fill="none"/></svg>
  <svg style="left:1449px;top:869px" width="3" height="16" viewBox="0 0 3 16"><circle cx="1.500" cy="2" r="1" fill="#c5ced4"/><circle cx="1.500" cy="8" r="1" fill="#c5ced4"/><circle cx="1.500" cy="14" r="1" fill="#c5ced4"/></svg>
  <svg style="left:178px;top:929px" width="18" height="18" viewBox="0 0 18 18"><path d="M3 5v9M7 3.500v11M11.500 5v8" stroke="#f8f9fa" stroke-width="2.500"/><path d="M0 9.800h8" stroke="#b9f2d8" stroke-width="1.600"/><path d="M8 9.800h8" stroke="#fbf3bd" stroke-width="1.600"/></svg>
  <div class="a trk" style="top:930.5px"></div>
  <div class="a fill" style="top:930.5px;width:20px;background:#0fdd6f"></div>
  <div class="a dm" style="left:976px;top:935.5px"></div>
  <svg style="left:1391px;top:930px" width="16" height="16" viewBox="0 0 16 16"><path d="M8.500 2.500h-8v13h13v-8" stroke="#b4c0c8" stroke-width="1" fill="none"/><path d="M6.500 9.500l9-9M10.500 0.500h5v5" stroke="#b4c0c8" stroke-width="1" fill="none"/></svg>
  <svg style="left:1449px;top:930px" width="3" height="16" viewBox="0 0 3 16"><circle cx="1.500" cy="2" r="1" fill="#c5ced4"/><circle cx="1.500" cy="8" r="1" fill="#c5ced4"/><circle cx="1.500" cy="14" r="1" fill="#c5ced4"/></svg>
  <svg style="left:178px;top:990px" width="18" height="18" viewBox="0 0 18 18"><path d="M3 5v9M7 3.500v11M11.500 5v8" stroke="#f8f9fa" stroke-width="2.500"/><path d="M0 9.800h8" stroke="#b9f2d8" stroke-width="1.600"/><path d="M8 9.800h8" stroke="#fbf3bd" stroke-width="1.600"/></svg>
  <div class="a trk" style="top:991.5px"></div>
  <div class="a fill" style="top:991.5px;width:16px;background:#0fdd6f"></div>
  <div class="a dm" style="left:976px;top:996.5px"></div>
  <svg style="left:1391px;top:991px" width="16" height="16" viewBox="0 0 16 16"><path d="M8.500 2.500h-8v13h13v-8" stroke="#b4c0c8" stroke-width="1" fill="none"/><path d="M6.500 9.500l9-9M10.500 0.500h5v5" stroke="#b4c0c8" stroke-width="1" fill="none"/></svg>
  <svg style="left:1449px;top:991px" width="3" height="16" viewBox="0 0 3 16"><circle cx="1.500" cy="2" r="1" fill="#c5ced4"/><circle cx="1.500" cy="8" r="1" fill="#c5ced4"/><circle cx="1.500" cy="14" r="1" fill="#c5ced4"/></svg>
  <svg style="left:178px;top:1051px" width="18" height="18" viewBox="0 0 18 18"><path d="M3 5v9M7 3.500v11M11.500 5v8" stroke="#f8f9fa" stroke-width="2.500"/><path d="M0 9.800h8" stroke="#b9f2d8" stroke-width="1.600"/><path d="M8 9.800h8" stroke="#fbf3bd" stroke-width="1.600"/></svg>
  <div class="a trk" style="top:1052.5px"></div>
  <div class="a fill" style="top:1052.5px;width:16px;background:#0fdd6f"></div>
  <div class="a dm" style="left:976px;top:1057.5px"></div>
  <svg style="left:1391px;top:1052px" width="16" height="16" viewBox="0 0 16 16"><path d="M8.500 2.500h-8v13h13v-8" stroke="#b4c0c8" stroke-width="1" fill="none"/><path d="M6.500 9.500l9-9M10.500 0.500h5v5" stroke="#b4c0c8" stroke-width="1" fill="none"/></svg>
  <svg style="left:1449px;top:1052px" width="3" height="16" viewBox="0 0 3 16"><circle cx="1.500" cy="2" r="1" fill="#c5ced4"/><circle cx="1.500" cy="8" r="1" fill="#c5ced4"/><circle cx="1.500" cy="14" r="1" fill="#c5ced4"/></svg>
  <svg style="left:178px;top:1111.5px" width="18" height="18" viewBox="0 0 18 18"><path d="M3 5v9M7 3.500v11M11.500 5v8" stroke="#f8f9fa" stroke-width="2.500"/><path d="M0 9.800h8" stroke="#b9f2d8" stroke-width="1.600"/><path d="M8 9.800h8" stroke="#fbf3bd" stroke-width="1.600"/></svg>
  <div class="a trk" style="top:1113.0px"></div>
  <div class="a fill" style="top:1113.0px;width:18px;background:#0fdd6f"></div>
  <div class="a dm" style="left:976px;top:1118.0px"></div>
  <svg style="left:1391px;top:1112.5px" width="16" height="16" viewBox="0 0 16 16"><path d="M8.500 2.500h-8v13h13v-8" stroke="#b4c0c8" stroke-width="1" fill="none"/><path d="M6.500 9.500l9-9M10.500 0.500h5v5" stroke="#b4c0c8" stroke-width="1" fill="none"/></svg>
  <svg style="left:1449px;top:1112.5px" width="3" height="16" viewBox="0 0 3 16"><circle cx="1.500" cy="2" r="1" fill="#c5ced4"/><circle cx="1.500" cy="8" r="1" fill="#c5ced4"/><circle cx="1.500" cy="14" r="1" fill="#c5ced4"/></svg>

  <div class="a" style="left:166px;top:1162px;width:262px;height:40px;border:5px solid #000"></div>
  <div class="a" style="left:180px;top:1172.500px;width:17px;height:17px;border-radius:9px;background:#2f7bf5"></div>
  <div class="a" style="left:185px;top:1180.250px;width:7px;height:1.500px;background:#fff"></div>
  <div class="a" style="left:187.750px;top:1177.500px;width:1.500px;height:7px;background:#fff"></div>
  <div class="a" style="left:445.500px;top:1172.500px;width:17px;height:17px;border-radius:9px;background:#2f7bf5"></div>
  <div class="a" style="left:450.500px;top:1180.250px;width:7px;height:1.500px;background:#fff"></div>
  <div class="a" style="left:453.250px;top:1177.500px;width:1.500px;height:7px;background:#fff"></div>
  <svg style="left:1160.500px;top:1174px" width="17" height="13" viewBox="0 0 17 13"><path d="M0 0.600h17M3 6.500h13M0.500 12.400h15" stroke="#2f7bf5" stroke-width="1.100"/></svg>
  <svg style="left:1306px;top:1172px" width="22" height="17" viewBox="0 0 22 17"><g stroke="#2f7bf5" stroke-width="1.100" fill="none"><circle cx="5" cy="8" r="2.300"/><path d="M0.500 16.500c0-3.500 2-4.800 4.500-4.800s4.500 1.300 4.500 4.800z"/><path d="M4 3.500v-3h17.500v12.500h-9"/><path d="M13.500 13v-2.500h4.500v2.500"/></g></svg>
</div>
<!-- TEXT LAYER (absolute page coordinates) -->
<div id="txt" class="a" style="left:0;top:0;width:1922px;height:1293px">
  <div class="t" style="left:3.9px;top:46px;font-size:11px;font-weight:bold;color:#2f7bf5;letter-spacing:0.43px">Overview</div>
  <div class="t" style="left:4.2px;top:121px;font-size:11.5px;color:#6b7f8a;letter-spacing:0.16px">Hierarchy</div>
  <div class="t" style="left:19.45px;top:195px;font-size:11.5px;color:#6b7f8a;letter-spacing:-0.33px">Tree</div>
  <div class="t" style="left:7.7px;top:271px;font-size:11.5px;color:#6b7f8a;letter-spacing:0.29px">Projects</div>
  <div class="t" style="left:5.6px;top:345px;font-size:11.5px;color:#6b7f8a;letter-spacing:0.3px">Statistics</div>
  <div class="t" style="left:3.6px;top:420px;font-size:11.5px;color:#6b7f8a;letter-spacing:0.17px">Newsfeed</div>
  <div class="t" style="left:8.7px;top:1282px;font-size:11.5px;color:#6b7f8a;letter-spacing:0.34px">Support</div>
  <div class="t" style="left:81px;top:24px;font-size:13px;color:#6b7f8a;letter-spacing:0.27px">Find people or teams ...</div>
  <div class="t" style="left:102px;top:85px;font-size:11px;font-weight:bold;color:#b3bec6;letter-spacing:0.19px">COMPANY REPORTS</div>
  <div class="t" style="left:108.95px;top:126px;font-size:13px;color:#5a6f7b;letter-spacing:0.24px">Company</div>
  <div class="t" style="left:81.85px;top:169px;font-size:10.5px;color:#e0245e;letter-spacing:-0.05px">Ma</div>
  <div class="t" style="left:108.95px;top:168px;font-size:13px;font-weight:bold;color:#2f7bf5;letter-spacing:0.57px">Marketing</div>
  <div class="t" style="left:110px;top:210px;font-size:13px;-webkit-text-stroke:.8px;color:#5d717d;letter-spacing:0.52px">Add team</div>
  <div class="t" style="left:108.75px;top:251px;font-size:13px;-webkit-text-stroke:.8px;color:#5d717d;letter-spacing:0.62px">Invite people</div>
  <div class="t" style="left:117.4px;top:316px;font-size:13.5px;font-weight:bold;color:#2f7bf5;letter-spacing:-0.28px">Remove examples</div>
  <div class="t" style="left:108px;top:368px;font-size:13.5px;font-weight:bold;color:#2f7bf5;letter-spacing:-0.03px">Re-take product tour</div>
  <div class="t" style="left:81.95px;top:1100px;font-size:11px;font-weight:bold;color:#fde9a9;letter-spacing:0.18px">HELP</div>
  <div class="t" style="left:105.45px;top:1131px;font-size:16px;color:#fff;letter-spacing:0.63px">Read this first!</div>
  <div class="t" style="left:103.85px;top:1164px;font-size:16px;color:#fff;letter-spacing:0.77px">Quick setup</div>
  <div class="t" style="left:107.25px;top:1198px;font-size:16px;color:#fff;letter-spacing:0.51px">Help &amp; FAQ</div>
  <div class="t" style="left:105.45px;top:1231px;font-size:16px;color:#fff;letter-spacing:0.29px">Learn OKRs</div>
  <div class="t" style="left:108.55px;top:1263px;font-size:16px;color:#fff;letter-spacing:0.63px">Try these things</div>
  <div class="t" style="left:1031.3px;top:13px;font-size:16.5px;-webkit-text-stroke:.7px;color:#5a7383;letter-spacing:0.78px">Quarterly Objectives</div>
  <div class="t" style="left:1719.15px;top:16px;font-size:12.5px;font-weight:bold;color:#fff;letter-spacing:-0.33px">Add</div>
  <div class="t" style="left:1790.95px;top:6px;font-size:10px;font-weight:bold;color:#fff">2</div>
  <div class="t" style="left:1049.35px;top:64px;font-size:19.5px;font-weight:bold;color:#455a64;letter-spacing:-0.06px">Marketing</div>
  <div class="t" style="left:1762.7px;top:67px;font-size:13px;-webkit-text-stroke:.7px;color:#5a7383;letter-spacing:0.05px">This Quarter</div>
  <div class="t" style="left:822.25px;top:106px;font-size:16.5px;color:#2f7bf5;letter-spacing:0.49px">Overview</div>
  <div class="t" style="left:962.15px;top:106px;font-size:16.5px;color:#607d8b;letter-spacing:0.48px">Hierarchy</div>
  <div class="t" style="left:1105.75px;top:106px;font-size:16.5px;color:#607d8b;letter-spacing:0.22px">Tree</div>
  <div class="t" style="left:1206.75px;top:106px;font-size:16.5px;color:#607d8b;letter-spacing:0.61px">Projects</div>
  <div class="t" style="left:1338.45px;top:106px;font-size:16.5px;color:#607d8b;letter-spacing:0.68px">Updates</div>
  <div class="t" style="left:502.3px;top:229px;font-size:23px;font-weight:bold;color:#3f525e;letter-spacing:-0.23px">How does it work?</div>
  <div class="t" style="left:527.95px;top:279px;font-size:16.5px;color:#4a5e6a;letter-spacing:0.4px">KPIs set perfomance expectations</div>
  <div class="t" style="left:528.45px;top:307px;font-size:16.5px;color:#4a5e6a;letter-spacing:0.3px">OKRs define what needs to change and improve in a quarter</div>
  <div class="t" style="left:527.95px;top:334px;font-size:16.5px;color:#4a5e6a;letter-spacing:0.34px">Projects and Weekly Planning help you get things done</div>
  <div class="t" style="left:1394.3px;top:473px;font-size:11px;color:#c6cdd3;letter-spacing:0.38px">Last updated 8 minutes ago. There are 12 weeks remaining this quarter.</div>
  <div class="t" style="left:542.4px;top:519px;font-size:17px;-webkit-text-stroke:.7px;color:#3f525e;letter-spacing:0.07px">KPIs</div>
  <div class="t" style="left:542.9px;top:582px;font-size:17px;-webkit-text-stroke:.7px;color:#3f525e;letter-spacing:0.56px">Quarterly Objectives</div>
  <div class="t" style="left:542.7px;top:1252px;font-size:17px;-webkit-text-stroke:.7px;color:#3f525e;letter-spacing:0.56px">Projects</div>
  <div class="t" style="left:489.3px;top:640px;font-size:16.5px;-webkit-text-stroke:.7px;color:#3f525e;letter-spacing:0.67px">Team Objectives</div>
  <div class="t" style="left:504px;top:1173px;font-size:16.5px;color:#2f7bf5;letter-spacing:0.53px">Add a Quarterly Objective</div>
  <div class="t" style="left:768.9px;top:1173px;font-size:16.5px;color:#2f7bf5;letter-spacing:0.5px">Add an annual Objective</div>
  <div class="t" style="left:1476.15px;top:1173px;font-size:16.5px;color:#2f7bf5;letter-spacing:0.2px">See examples</div>
  <div class="t" style="left:1625.15px;top:1173px;font-size:16.5px;color:#2f7bf5;letter-spacing:0.23px">Use OKR Wizard</div>
  <div class="t" style="left:507.45px;top:869px;font-size:16.5px;color:#353f47;letter-spacing:0.25px">Example: Improve my team using OKRs and Weekly Check-ins</div>
  <div class="t" style="left:1604.75px;top:869px;font-size:18.5px;-webkit-text-stroke:.7px;color:#546e7a;letter-spacing:1.15px">3%</div>
  <div class="t" style="left:507.45px;top:930px;font-size:16.5px;color:#353f47;letter-spacing:0.34px">Example: Achieve record revenues while increasing profitability</div>
  <div class="t" style="left:1604.5px;top:929px;font-size:18.5px;-webkit-text-stroke:.7px;color:#546e7a;letter-spacing:1.4px">8%</div>
  <div class="t" style="left:507.45px;top:991px;font-size:16.5px;color:#353f47;letter-spacing:0.35px">Example: Successfully launch version 3 of our main product</div>
  <div class="t" style="left:1604.5px;top:990px;font-size:18.5px;-webkit-text-stroke:.7px;color:#546e7a;letter-spacing:1.4px">6%</div>
  <div class="t" style="left:507.45px;top:1052px;font-size:16.5px;color:#353f47;letter-spacing:0.38px">Example: Simplify &amp; clarify our product usage</div>
  <div class="t" style="left:1604.5px;top:1051px;font-size:18.5px;-webkit-text-stroke:.7px;color:#546e7a;letter-spacing:1.4px">6%</div>
  <div class="t" style="left:507.45px;top:1113px;font-size:16.5px;color:#353f47;letter-spacing:0.33px">Example: Be excellent - improve to be the best in whatever we do</div>
  <div class="t" style="left:1604.5px;top:1112px;font-size:18.5px;-webkit-text-stroke:.7px;color:#546e7a;letter-spacing:1.4px">7%</div>
  <div class="t b" style="left:208px;top:153.500px;font-size:42px;color:#000;-webkit-text-stroke:1.200px #000">3<span style="font-family:Liberation Serif,serif;font-size:70px;line-height:0;margin-left:1px;-webkit-text-stroke:0">.</span></div>
  <div class="t b" style="left:408.500px;top:1161.500px;font-size:42px;color:#000;-webkit-text-stroke:1.200px #000">4<span style="font-family:Liberation Serif,serif;font-size:60px;line-height:0;margin-left:1px;-webkit-text-stroke:0">.</span></div>
</div>
</body>
</html>
